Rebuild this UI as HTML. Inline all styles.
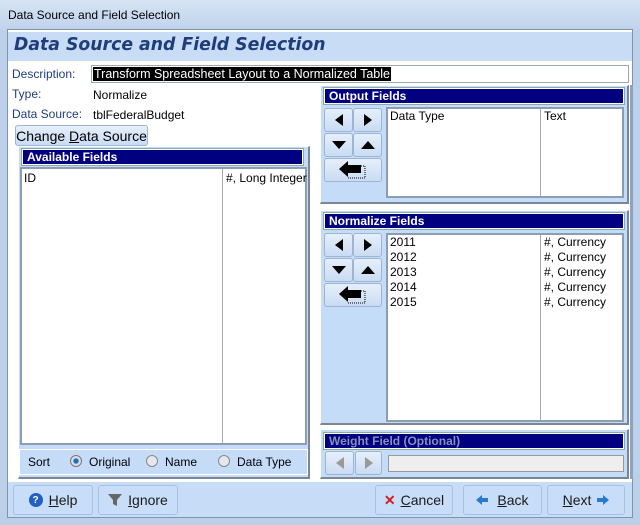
<!DOCTYPE html>
<html><head><style>
*{box-sizing:border-box;margin:0;padding:0}
body{width:640px;height:525px;overflow:hidden;font-family:"Liberation Sans",sans-serif;font-size:12px;background:#bcd0ea;position:relative}
.a{position:absolute}
.t{white-space:nowrap}
.hdr{position:absolute;background:#000080;color:#fff;font-weight:bold;font-size:12px;padding:0 4px;line-height:14px;border:1px solid #fff;outline:1px solid #8aa;}
.panel{position:absolute;background:#c5dcf8;border:1px solid #fff;border-right:2px solid #7a8796;border-bottom:2px solid #7a8796}
.list{position:absolute;background:#fff;border:2px solid #8c9db3;}
.btn{position:absolute;background:linear-gradient(#e6effb,#cadcf3);border:1px solid #9db4d3;border-radius:3px;display:flex;align-items:center;justify-content:center}
.bb{position:absolute;background:#c8ddf8;border:1px solid #a9c1e0;border-radius:3px;display:flex;align-items:center;justify-content:center;font-size:14px;color:#1a1a1a}
u{text-decoration:underline}
</style></head><body>
<div class="a" style="left:0;top:0;width:640px;height:30px;background:linear-gradient(#d6e4f5,#bfd3ec)"></div>
<div class="a t" style="left:8px;top:8px;font-size:12px;color:#000">Data Source and Field Selection</div>
<div class="a" style="left:7px;top:29px;width:626px;height:489px;border:1px solid #7d93b0;background:#fff"></div>
<div class="a" style="left:8px;top:32px;width:624px;height:29px;background:#c9dcf5"></div>
<div class="a t" style="left:14px;top:34px;font-family:'DejaVu Sans',sans-serif;font-size:18px;font-weight:bold;font-style:italic;color:#1f3d7a;transform:scaleX(0.96);transform-origin:left">Data Source and Field Selection</div>
<div class="a t" style="left:12px;top:67px;color:#1f3d7a">Description:</div>
<div class="a" style="left:91px;top:65px;width:538px;height:18px;background:#fff;border:1px solid #9aa"></div>
<div class="a t" style="left:93px;top:67px;background:#000;color:#fff;padding:0 1px;font-size:12.5px;line-height:14px">Transform Spreadsheet Layout to a Normalized Table</div>
<div class="a t" style="left:12px;top:87px;color:#1f3d7a">Type:</div>
<div class="a t" style="left:93px;top:88px">Normalize</div>
<div class="a t" style="left:12px;top:107px;color:#1f3d7a">Data Source:</div>
<div class="a t" style="left:93px;top:108px">tblFederalBudget</div>
<div class="btn t" style="left:15px;top:125px;width:133px;height:21px;font-size:14px">Change&nbsp;<u>D</u>ata Source</div>

<div class="panel" style="left:18px;top:146px;width:292px;height:333px"></div>
<div class="hdr t" style="left:22px;top:149px;width:281px;height:16px">Available Fields</div>
<div class="list" style="left:20px;top:167px;width:287px;height:278px"></div>
<div class="a" style="left:222px;top:169px;width:1px;height:274px;background:#aaa"></div>
<div class="a t" style="left:24px;top:171px">ID</div>
<div class="a t" style="left:226px;top:171px">#, Long Integer</div>
<div class="a" style="left:19px;top:449px;width:289px;height:26px;border:1px solid #fff"></div>
<div class="a t" style="left:28px;top:455px">Sort</div>
<div class="a" style="left:70px;top:455px;width:12px;height:12px;border-radius:50%;background:radial-gradient(#1d6fb0 30%,#dde 45%);border:1px solid #777"></div>
<div class="a t" style="left:89px;top:455px">Original</div>
<div class="a" style="left:146px;top:455px;width:12px;height:12px;border-radius:50%;background:#e4e8ee;border:1px solid #888"></div>
<div class="a t" style="left:165px;top:455px">Name</div>
<div class="a" style="left:218px;top:455px;width:12px;height:12px;border-radius:50%;background:#e4e8ee;border:1px solid #888"></div>
<div class="a t" style="left:237px;top:455px">Data Type</div>

<div class="panel" style="left:320px;top:85px;width:309px;height:119px"></div>
<div class="hdr t" style="left:324px;top:88px;width:300px;height:16px">Output Fields</div>
<div class="btn" style="left:324px;top:108px;width:29px;height:24px"><svg width="8" height="12"><path d="M0 6L8 0V12Z"/></svg></div>
<div class="btn" style="left:353px;top:108px;width:29px;height:24px"><svg width="8" height="12"><path d="M8 6L0 0V12Z"/></svg></div>
<div class="btn" style="left:324px;top:133px;width:29px;height:24px"><svg width="14" height="8"><path d="M0 0H14L7 8Z"/></svg></div>
<div class="btn" style="left:353px;top:133px;width:29px;height:24px"><svg width="14" height="8"><path d="M0 8H14L7 0Z"/></svg></div>
<div class="btn" style="left:324px;top:158px;width:58px;height:24px"><svg width="28" height="18"><path d="M8 5h18v12H8" fill="none" stroke="#000" stroke-dasharray="1 1"/><path d="M0 8L9 0V4H22V12H9V16Z"/></svg></div>
<div class="list" style="left:386px;top:107px;width:238px;height:91px"></div>
<div class="a" style="left:540px;top:109px;width:1px;height:87px;background:#aaa"></div>
<div class="a t" style="left:390px;top:109px">Data Type</div>
<div class="a t" style="left:544px;top:109px">Text</div>

<div class="panel" style="left:320px;top:210px;width:309px;height:215px"></div>
<div class="hdr t" style="left:324px;top:213px;width:300px;height:16px">Normalize Fields</div>
<div class="btn" style="left:324px;top:233px;width:29px;height:24px"><svg width="8" height="12"><path d="M0 6L8 0V12Z"/></svg></div>
<div class="btn" style="left:353px;top:233px;width:29px;height:24px"><svg width="8" height="12"><path d="M8 6L0 0V12Z"/></svg></div>
<div class="btn" style="left:324px;top:258px;width:29px;height:24px"><svg width="14" height="8"><path d="M0 0H14L7 8Z"/></svg></div>
<div class="btn" style="left:353px;top:258px;width:29px;height:24px"><svg width="14" height="8"><path d="M0 8H14L7 0Z"/></svg></div>
<div class="btn" style="left:324px;top:283px;width:58px;height:24px"><svg width="28" height="18"><path d="M8 5h18v12H8" fill="none" stroke="#000" stroke-dasharray="1 1"/><path d="M0 8L9 0V4H22V12H9V16Z"/></svg></div>
<div class="list" style="left:386px;top:233px;width:238px;height:189px"></div>
<div class="a" style="left:540px;top:235px;width:1px;height:185px;background:#aaa"></div>
<div class="a t" style="left:390px;top:235px;line-height:15px">2011<br>2012<br>2013<br>2014<br>2015</div>
<div class="a t" style="left:544px;top:235px;line-height:15px">#, Currency<br>#, Currency<br>#, Currency<br>#, Currency<br>#, Currency</div>

<div class="panel" style="left:320px;top:429px;width:309px;height:50px"></div>
<div class="hdr t" style="left:324px;top:433px;width:300px;height:16px;color:#8a8fb8">Weight Field (Optional)</div>
<div class="btn" style="left:325px;top:451px;width:29px;height:24px"><svg width="8" height="12"><path d="M0 6L8 0V12Z" fill="#999"/></svg></div>
<div class="btn" style="left:355px;top:451px;width:27px;height:24px"><svg width="8" height="12"><path d="M8 6L0 0V12Z" fill="#999"/></svg></div>
<div class="a" style="left:388px;top:455px;width:236px;height:17px;background:#eee;border:1px solid #999"></div>
<div class="a" style="left:630px;top:85px;width:3px;height:394px;background:#8fa3bd"></div>

<div class="a" style="left:8px;top:482px;width:624px;height:35px;background:#c6dcf7"></div>
<div class="bb" style="left:13px;top:485px;width:80px;height:30px"><span style="color:#fff;background:#2060c0;border-radius:50%;width:14px;height:14px;font-size:10px;display:inline-flex;align-items:center;justify-content:center;margin-right:6px;font-weight:bold">?</span><u>H</u>elp</div>
<div class="bb" style="left:98px;top:485px;width:80px;height:30px"><svg width="14" height="14" style="margin-right:6px"><path d="M0 1H14L9 7V13L5 11V7Z" fill="#666"/></svg><u>I</u>gnore</div>
<div class="bb" style="left:375px;top:485px;width:78px;height:30px"><span style="color:#d02020;font-weight:bold;margin-right:5px">✕</span><u>C</u>ancel</div>
<div class="bb" style="left:463px;top:485px;width:79px;height:30px"><svg width="12" height="10" style="margin-right:9px"><path d="M0 5L6 0V3H12V7H6V10Z" fill="#2a7ad0"/></svg><u>B</u>ack</div>
<div class="bb" style="left:547px;top:485px;width:78px;height:30px"><u>N</u>ext<svg width="12" height="10" style="margin-left:6px"><path d="M12 5L6 0V3H0V7H6V10Z" fill="#2a7ad0"/></svg></div>
</body></html>
